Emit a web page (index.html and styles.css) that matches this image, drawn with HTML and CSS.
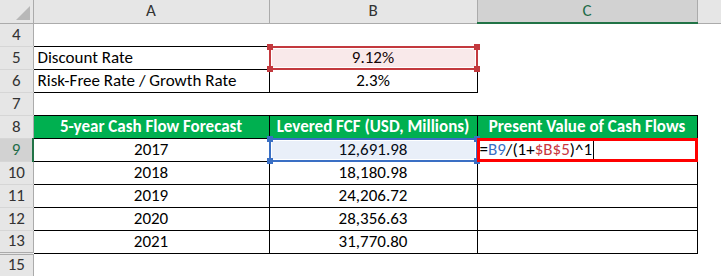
FILE: index.html
```html
<!DOCTYPE html>
<html>
<head>
<meta charset="utf-8">
<link rel="stylesheet" href="styles.css">
</head>
<body>
<table class="sheet">
  <colgroup>
    <col class="c-hdr"><col class="c-a"><col class="c-b"><col class="c-c"><col class="c-d">
  </colgroup>
  <tr class="colhdr">
    <th class="corner"><span class="tri"></span></th>
    <th>A</th>
    <th>B</th>
    <th class="sel-col">C</th>
    <th class="last"></th>
  </tr>
  <tr>
    <th class="rh">4</th><td></td><td></td><td></td><td></td>
  </tr>
  <tr>
    <th class="rh">5</th>
    <td class="bx left">Discount Rate</td>
    <td class="bx center rel">9.12%
      <div class="range red"><i class="h tl"></i><i class="h tr"></i><i class="h bl"></i><i class="h br"></i></div>
    </td>
    <td></td><td></td>
  </tr>
  <tr>
    <th class="rh">6</th>
    <td class="bx left">Risk-Free Rate / Growth Rate</td>
    <td class="bx center">2.3%</td>
    <td></td><td></td>
  </tr>
  <tr>
    <th class="rh">7</th><td></td><td></td><td></td><td></td>
  </tr>
  <tr>
    <th class="rh">8</th>
    <td class="bx green">5-year Cash Flow Forecast</td>
    <td class="bx green">Levered FCF (USD, Millions)</td>
    <td class="bx green">Present Value of Cash Flows</td>
    <td></td>
  </tr>
  <tr>
    <th class="rh sel-row">9</th>
    <td class="bx center">2017</td>
    <td class="bx center rel">12,691.98
      <div class="range blue"><i class="h tl"></i><i class="h tr"></i><i class="h bl"></i><i class="h br"></i></div>
    </td>
    <td class="bx rel edit"><span class="f-blk">=</span><span class="f-blue">B9</span><span class="f-blk">/(1+</span><span class="f-red">$B$5</span><span class="f-blk">)^1</span><span class="caret"></span>
      <div class="editbox"></div>
    </td>
    <td></td>
  </tr>
  <tr>
    <th class="rh">10</th>
    <td class="bx center">2018</td><td class="bx center">18,180.98</td><td class="bx"></td><td></td>
  </tr>
  <tr>
    <th class="rh">11</th>
    <td class="bx center">2019</td><td class="bx center">24,206.72</td><td class="bx"></td><td></td>
  </tr>
  <tr>
    <th class="rh">12</th>
    <td class="bx center">2020</td><td class="bx center">28,356.63</td><td class="bx"></td><td></td>
  </tr>
  <tr>
    <th class="rh hidden-next">13</th>
    <td class="bx center">2021</td><td class="bx center">31,770.80</td><td class="bx"></td><td></td>
  </tr>
  <tr>
    <th class="rh">15</th><td></td><td></td><td></td><td></td>
  </tr>
</table>
</body>
</html>
```

FILE: styles.css
```css
html, body {
  margin: 0;
  padding: 0;
  background: #ffffff;
}
body {
  width: 721px;
  height: 276px;
  overflow: hidden;
  font-family: "Carlito", "Lato", "Liberation Sans", sans-serif;
  font-size: 17px;
  color: #000;
}
.sheet {
  border-collapse: collapse;
  table-layout: fixed;
  width: 721px;
}
.c-hdr { width: 33px; }
.c-a { width: 236px; }
.c-b { width: 208px; }
.c-c { width: 220px; }
.c-d { width: 24px; }

.sheet tr { height: 23px; }
.sheet th, .sheet td {
  height: 23px;
  padding: 0;
  box-sizing: border-box;
  white-space: nowrap;
  overflow: visible;
  line-height: 20px;
}

.colhdr th {
  background: #e6e6e6;
  font-weight: normal;
  color: #333;
  text-align: center;
  border-right: 1px solid #ababab;
  border-bottom: 1px solid #ababab;
  position: relative;
}
.colhdr th.last { border-right: none; }
.colhdr th.sel-col {
  background: #d2d2d2;
  color: #1d6b47;
  border-bottom: 2px solid #217346;
}
.corner .tri {
  position: absolute;
  right: 3px;
  bottom: 3px;
  width: 0;
  height: 0;
  border-left: 14px solid transparent;
  border-bottom: 14px solid #b8b8b8;
}

.rh {
  background: #e6e6e6;
  font-weight: normal;
  color: #333;
  text-align: center;
  border-right: 1px solid #ababab;
  border-bottom: 1px solid #d6d6d6;
}
.rh.sel-row {
  background: #d2d2d2;
  color: #1d6b47;
  border-right: 2px solid #217346;
}
.rh.hidden-next {
  border-bottom: 3px double #ababab;
}

.bx { border: 1px solid #000; }
.left { text-align: left; padding-left: 4px !important; }
.center { text-align: center; }
.green {
  background: #00b050;
  color: #fff;
  font-weight: bold;
  text-align: center;
}
.rel { position: relative; }

.range {
  position: absolute;
  left: -1px;
  top: -1px;
  right: -1px;
  bottom: -1px;
  border: 2px solid;
  pointer-events: none;
}
.range.red {
  border-color: #c3393e;
  background: rgba(200, 55, 60, 0.11);
  box-shadow: inset 0 0 0 1px #fff;
}
.range.blue {
  border-color: #3a6fc4;
  background: rgba(58, 111, 196, 0.11);
  box-shadow: inset 0 0 0 1px #fff;
}
.range .h {
  position: absolute;
  width: 6px;
  height: 6px;
}
.range.red .h { background: #c3393e; }
.range.blue .h { background: #3a6fc4; }
.h.tl { left: -4px; top: -4px; }
.h.tr { right: -4px; top: -4px; }
.h.bl { left: -4px; bottom: -4px; }
.h.br { right: -4px; bottom: -4px; }

.edit { padding-left: 2px !important; text-align: left; }
.f-blue { color: #3a6fc4; }
.f-red { color: #c8373f; }
.f-blk { color: #000; }
.caret {
  display: inline-block;
  width: 1px;
  height: 19px;
  background: #000;
  vertical-align: -4px;
  margin-left: 1px;
}
.editbox {
  position: absolute;
  left: -1px;
  top: -1px;
  right: -1px;
  bottom: -1px;
  border: 3px solid #ff0000;
  pointer-events: none;
}
```
